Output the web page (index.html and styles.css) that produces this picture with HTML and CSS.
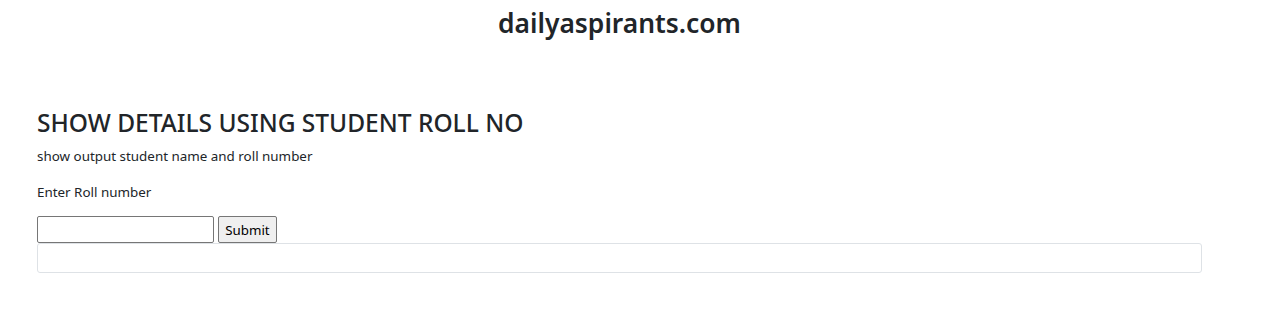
FILE: index.html
```html
<!DOCTYPE html>
<html lang="en">
<head>
<meta charset="utf-8">
<title>dailyaspirants.com</title>
<link rel="stylesheet" href="styles.css">
</head>
<body>
<div class="page">
  <h1 class="site-title">dailyaspirants.com</h1>
  <section class="panel">
    <h2 class="panel-title">SHOW DETAILS USING STUDENT ROLL NO</h2>
    <p class="panel-sub">show output student name and roll number</p>
    <form class="roll-form">
      <label class="roll-label" for="roll">Enter Roll number</label>
      <div class="roll-row">
        <input id="roll" class="roll-input" type="text">
        <button type="button" class="roll-btn">Submit</button>
      </div>
    </form>
    <div class="output"></div>
  </section>
</div>
</body>
</html>
```

FILE: styles.css
```css
* { box-sizing: border-box; }
html, body { margin: 0; padding: 0; background: #fff; }
body {
  font-family: "Noto Sans", "Open Sans", sans-serif;
  color: #212529;
}
.page {
  padding: 0 69px 0 37px;
}
.site-title {
  margin: 0;
  padding-top: 3px;
  text-align: center;
  font-size: 26.4px;
  line-height: 40px;
  font-weight: 600;
}
.panel {
  padding-top: 64px;
}
.panel-title {
  margin: 0;
  font-size: 24.5px;
  line-height: 32px;
  font-weight: 500;
  letter-spacing: 0;
}
.panel-sub {
  margin: 7px 0 0;
  font-size: 13.4px;
  line-height: 20px;
}
.roll-form { margin-top: 16px; }
.roll-label {
  display: block;
  font-size: 13.4px;
  line-height: 20px;
}
.roll-row {
  display: flex;
  gap: 4px;
  margin-top: 14px;
}
.roll-input {
  width: 177px;
  height: 27px;
  border: 1px solid #767676;
  border-radius: 2px;
  padding: 0 4px;
  font: inherit;
  font-size: 13px;
}
.roll-btn {
  width: 59px;
  height: 27px;
  border: 1px solid #767676;
  border-radius: 2px;
  background: #efefef;
  color: #000;
  font-family: inherit;
  font-size: 13.3px;
  padding: 0;
}
.output {
  height: 30px;
  border: 1px solid #dee2e6;
  border-radius: 3px;
}
```
